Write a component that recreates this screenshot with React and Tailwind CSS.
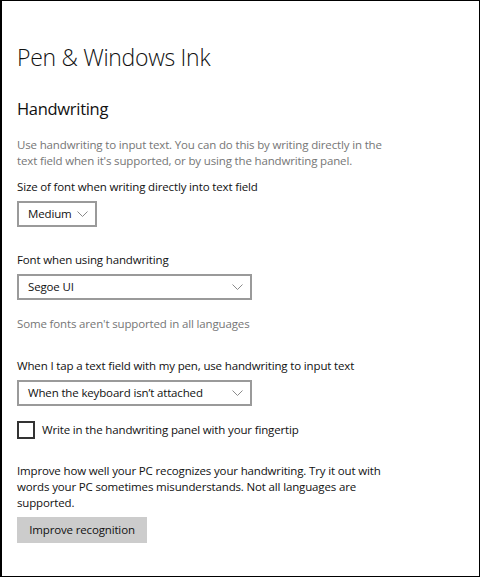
function Chevron() {
  return (
    <svg width="11" height="6" viewBox="0 0 11 6" fill="none" className="shrink-0">
      <path d="M0.5 0.5 L5.5 5.5 L10.5 0.5" stroke="#8a8a8a" strokeWidth="1" />
    </svg>
  )
}

function Dropdown({ label, width }) {
  return (
    <div
      className={`mt-[6px] h-[26px] ${width} border-2 border-[#9a9a9a] flex items-center justify-between pl-[9px] pr-[7px] text-[11.5px] tracking-[-0.15px] text-[#111]`}>
      <span className="whitespace-nowrap">{label}</span>
      <Chevron />
    </div>
  )
}

export default function App() {
  return (
    <div className="w-[480px] h-[577px] bg-white border border-black border-l-2 pl-[15px] font-['Open_Sans',sans-serif] text-[#111] text-[11.5px] tracking-[-0.15px] overflow-hidden">
      <h1 className="mt-[40px] text-[23px] leading-[32px] font-light tracking-[-0.3px] text-[#111]">
        Pen &amp; Windows Ink
      </h1>

      <h2 className="mt-[24px] text-[16.5px] leading-[24px] font-normal tracking-[-0.3px]">Handwriting</h2>

      <p className="mt-[16px] leading-[16px] text-[#767676] whitespace-nowrap">
        Use handwriting to input text. You can do this by writing directly in the
        <br />
        text field when it's supported, or by using the handwriting panel.
      </p>

      <div className="mt-[10px] leading-[16px]">
        Size of font when writing directly into text field
      </div>
      <Dropdown label="Medium" width="w-[80px]" />

      <div className="mt-[25px] leading-[16px]">Font when using handwriting</div>
      <Dropdown label="Segoe UI" width="w-[235px]" />

      <div className="mt-[16px] leading-[16px] text-[#767676]">
        Some fonts aren't supported in all languages
      </div>

      <div className="mt-[26px] leading-[16px]">
        When I tap a text field with my pen, use handwriting to input text
      </div>
      <Dropdown label="When the keyboard isn’t attached" width="w-[235px]" />

      <label className="mt-[15px] flex items-center gap-[7px] h-[18px]">
        <span className="w-[18px] h-[18px] border-2 border-[#333] bg-white shrink-0" />
        <span className="whitespace-nowrap">Write in the handwriting panel with your fingertip</span>
      </label>

      <p className="mt-[24px] leading-[16px] whitespace-nowrap">
        Improve how well your PC recognizes your handwriting. Try it out with
        <br />
        words your PC sometimes misunderstands. Not all languages are
        <br />
        supported.
      </p>

      <button className="mt-[6px] h-[26px] w-[130px] bg-[#cccccc] text-[#111] flex items-center justify-center">
        Improve recognition
      </button>
    </div>
  )
}
